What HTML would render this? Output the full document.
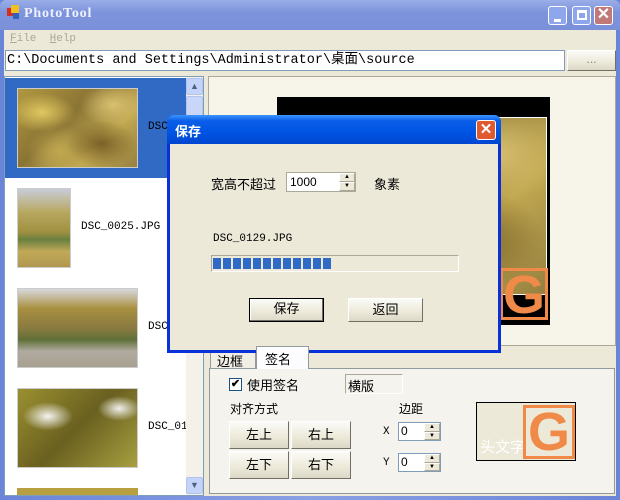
<!DOCTYPE html>
<html><head><meta charset="utf-8"><style>
*{margin:0;padding:0;box-sizing:border-box}
body{width:620px;height:500px;overflow:hidden;background:#ece9d8;font-family:"Liberation Sans","Noto Sans CJK SC",sans-serif;font-size:12px;position:relative}
.a{position:absolute}
.mono{font-family:"Liberation Mono","Noto Sans CJK SC",monospace}
.btn{position:absolute;background:linear-gradient(#fbfbf8,#ece9d8 60%,#dcd8c8);border:1px solid;border-color:#fff #716f64 #716f64 #fff;text-align:center;font-size:12px}
.leaf{background:radial-gradient(ellipse at 20% 30%,#e0c860 0,transparent 25%),radial-gradient(ellipse at 70% 70%,#7a6028 0,transparent 30%),radial-gradient(ellipse at 80% 20%,#d8c070 0,transparent 25%),radial-gradient(ellipse at 35% 80%,#c0a850 0,transparent 30%),linear-gradient(135deg,#b09840,#8a7434 40%,#c0a850 70%,#968040)}
.spin{position:absolute;background:#fff;border:1px solid #7f9db9}
.spin i{position:absolute;right:0;width:16px;height:50%;background:#ece9d8;border:1px solid #fff;border-right-color:#aca899;border-bottom-color:#aca899;font-style:normal;font-size:6px;text-align:center;line-height:7px}
</style></head><body>
<div class="a" style="left:0;top:0;width:620px;height:500px;background:linear-gradient(90deg,#6a84d8,#8aa0e4 50%,#6a84d8)"></div>
<div class="a" style="left:0;top:0;width:620px;height:30px;background:linear-gradient(#9aaee8,#7d94dd 40%,#7a90d8);border-radius:6px 6px 0 0"></div>
<div class="a" style="left:7px;top:8px;width:7px;height:8px;background:#d03020"></div>
<div class="a" style="left:11px;top:5px;width:8px;height:8px;background:#f0c020"></div>
<div class="a" style="left:13px;top:13px;width:6px;height:6px;background:#3060c0"></div>
<div class="a" style="left:24px;top:6px;color:#eef2ff;font-weight:bold;font-size:14px;font-family:'Liberation Serif',serif;letter-spacing:0.8px">PhotoTool</div>
<div class="a" style="left:548px;top:6px;width:19px;height:19px;border:1px solid #fff;border-radius:3px;background:#8ea6ec"><div class="a" style="left:5px;top:12px;width:7px;height:3px;background:#fff"></div></div>
<div class="a" style="left:572px;top:6px;width:19px;height:19px;border:1px solid #fff;border-radius:3px;background:#8ea6ec"><div class="a" style="left:4px;top:3px;width:10px;height:10px;border:2px solid #fff;border-top-width:3px"></div></div>
<div class="a" style="left:594px;top:6px;width:19px;height:19px;border:1px solid #fff;border-radius:3px;background:#c07878;color:#fff;font-size:16px;line-height:16px;text-align:center;font-weight:bold">✕</div>
<div class="a" style="left:4px;top:30px;width:612px;height:466px;background:#ece9d8"></div>
<div class="a mono" style="left:10px;top:33px;color:#aca899;font-size:11px"><u>F</u>ile&nbsp; <u>H</u>elp</div>
<div class="a mono" style="left:5px;top:50px;width:560px;height:21px;background:#fff;border:1px solid #7f9db9;font-size:13.5px;line-height:19px;padding-left:1px">C:\Documents and Settings\Administrator\桌面\source</div>
<div class="btn" style="left:567px;top:50px;width:49px;height:21px;line-height:17px;color:#888">...</div>
<div class="a" style="left:4px;top:76px;width:200px;height:420px;background:#fff;border:1px solid #7f9db9;overflow:hidden">
 <div class="a" style="left:0;top:1px;width:181px;height:100px;background:#316ac5"></div>
 <div class="a leaf" style="left:12px;top:11px;width:121px;height:80px;border:1px solid #ccc"></div>
 <div class="a mono" style="left:143px;top:44px;font-size:11px">DSC_</div>
 <div class="a" style="left:12px;top:111px;width:54px;height:80px;border:1px solid #ccc;background:linear-gradient(#c8ccd8 0,#b8a860 30%,#a09040 55%,#6a8040 65%,#c0a858 80%,#b09850)"></div>
 <div class="a mono" style="left:76px;top:144px;font-size:11px">DSC_0025.JPG</div>
 <div class="a" style="left:12px;top:211px;width:121px;height:80px;border:1px solid #ccc;background:linear-gradient(#d8d8dc 0,#a89040 25%,#8a7a40 50%,#607038 65%,#b0aaa0 80%,#a8a090)"></div>
 <div class="a mono" style="left:143px;top:244px;font-size:11px">DSC_</div>
 <div class="a" style="left:12px;top:311px;width:121px;height:80px;border:1px solid #ccc;background:radial-gradient(ellipse at 25% 35%,#f4f4f0 0,transparent 20%),radial-gradient(ellipse at 85% 25%,#f0f0ec 0,transparent 15%),linear-gradient(135deg,#9a9030,#6a6020 50%,#a8a040)"></div>
 <div class="a mono" style="left:143px;top:344px;font-size:11px">DSC_01</div>
 <div class="a" style="left:12px;top:411px;width:121px;height:10px;background:#b8a040"></div>
 <div class="a" style="left:181px;top:0;width:17px;height:418px;background:#f3f1ea"></div>
 <div class="a" style="left:181px;top:1px;width:17px;height:17px;background:#c4d4f8;border:1px solid #b0c4ee;border-radius:2px;color:#4d6185;font-size:9px;text-align:center;line-height:15px">▲</div>
 <div class="a" style="left:181px;top:19px;width:17px;height:80px;background:#c8d6f8;border:1px solid #b0c4ee;border-radius:2px"></div>
 <div class="a" style="left:181px;top:400px;width:17px;height:17px;background:#c4d4f8;border:1px solid #b0c4ee;border-radius:2px;color:#4d6185;font-size:9px;text-align:center;line-height:15px">▼</div>
</div>
<div class="a" style="left:208px;top:76px;width:408px;height:270px;background:#f7f4ea;border:1px solid #aca899"></div>
<div class="a" style="left:277px;top:97px;width:273px;height:228px;background:#000"></div>
<div class="a leaf" style="left:287px;top:117px;width:260px;height:178px;border:1px solid #fff"></div>
<div class="a" style="left:500px;top:268px;width:48px;height:52px;border:3px solid #f08a48;color:#f08a48;font-size:54px;font-weight:bold;line-height:48px;text-align:center">G</div>
<div class="a" style="left:208px;top:346px;width:408px;height:150px;background:#ece9d8"></div>
<div class="a" style="left:210px;top:350px;width:46px;height:18px;border:1px solid #919b9c;border-bottom:none;background:#f0eee5;padding-left:6px;font-size:13px">边框</div>
<div class="a" style="left:256px;top:346px;width:53px;height:23px;border:1px solid #919b9c;border-bottom:none;background:#fcfcfe;padding:2px 0 0 8px;font-size:13px;z-index:2">签名</div>
<div class="a" style="left:209px;top:368px;width:406px;height:126px;border:1px solid #919b9c;background:#f4f3ee"></div>
<div class="a" style="left:229px;top:378px;width:13px;height:13px;border:1px solid #1c5180;background:#fff;font-size:11px;line-height:11px;text-align:center;font-weight:bold">✔</div>
<div class="a" style="left:247px;top:375px;font-size:13px">使用签名</div>
<div class="a" style="left:345px;top:374px;width:58px;height:20px;border:1px solid;border-color:#aca899 #fff #fff #aca899;padding:1px 0 0 2px;font-size:13px">横版</div>
<div class="a" style="left:230px;top:400px;font-size:12px">对齐方式</div>
<div class="a" style="left:399px;top:400px;font-size:12px">边距</div>
<div class="btn" style="left:229px;top:421px;width:60px;height:28px;line-height:26px;font-size:13px">左上</div>
<div class="btn" style="left:291px;top:421px;width:60px;height:28px;line-height:26px;font-size:13px">右上</div>
<div class="btn" style="left:229px;top:451px;width:60px;height:28px;line-height:26px;font-size:13px">左下</div>
<div class="btn" style="left:291px;top:451px;width:60px;height:28px;line-height:26px;font-size:13px">右下</div>
<div class="a mono" style="left:383px;top:426px;font-size:11px">X</div>
<div class="a mono" style="left:383px;top:457px;font-size:11px">Y</div>
<div class="spin" style="left:398px;top:422px;width:43px;height:19px;padding-left:2px;line-height:17px">0<i style="top:0">▲</i><i style="top:50%">▼</i></div>
<div class="spin" style="left:398px;top:453px;width:43px;height:19px;padding-left:2px;line-height:17px">0<i style="top:0">▲</i><i style="top:50%">▼</i></div>
<div class="a" style="left:476px;top:402px;width:100px;height:59px;border:1px solid #000;background:#ece9d8"></div>
<div class="a" style="left:480px;top:436px;color:#fff;font-size:15px">头文字</div>
<div class="a" style="left:523px;top:405px;width:52px;height:54px;border:3px solid #f08a48;color:#f08a48;font-size:54px;font-weight:bold;line-height:48px;text-align:center">G</div>
<div class="a" style="left:167px;top:115px;width:334px;height:238px;background:#0831d9;border-radius:7px 7px 0 0"></div>
<div class="a" style="left:167px;top:115px;width:334px;height:29px;background:linear-gradient(#3d95ff,#0a5ee8 20%,#0054e3 60%,#0046d0);border-radius:7px 7px 0 0"></div>
<div class="a" style="left:175px;top:121px;color:#fff;font-weight:bold;font-size:13px">保存</div>
<div class="a" style="left:476px;top:120px;width:20px;height:20px;border:1px solid #fff;border-radius:3px;background:#e05a30;color:#fff;font-size:15px;line-height:18px;text-align:center;font-weight:bold">✕</div>
<div class="a" style="left:170px;top:144px;width:328px;height:206px;background:#ece9d8"></div>
<div class="a" style="left:211px;top:174px;font-size:13px">宽高不超过</div>
<div class="spin" style="left:286px;top:172px;width:70px;height:20px;padding-left:3px;line-height:18px;font-size:12px;border-color:#aca899">1000<i style="top:0">▲</i><i style="top:50%">▼</i></div>
<div class="a" style="left:374px;top:174px;font-size:13px">象素</div>
<div class="a mono" style="left:213px;top:233px;font-size:11px">DSC_0129.JPG</div>
<div class="a" style="left:211px;top:255px;width:248px;height:17px;border:1px solid;border-color:#aca899 #fff #fff #aca899;background:#ece9d8;padding:2px 1px"><div style="width:120px;height:11px;background:repeating-linear-gradient(90deg,#2f6ac6 0 8px,transparent 8px 10px)"></div></div>
<div class="btn" style="left:249px;top:298px;width:75px;height:24px;line-height:20px;border:1px solid #000;box-shadow:inset -1px -1px #716f64,inset 1px 1px #fff;font-size:13px">保存</div>
<div class="btn" style="left:348px;top:298px;width:75px;height:24px;line-height:21px;font-size:13px">返回</div>
</body></html>
